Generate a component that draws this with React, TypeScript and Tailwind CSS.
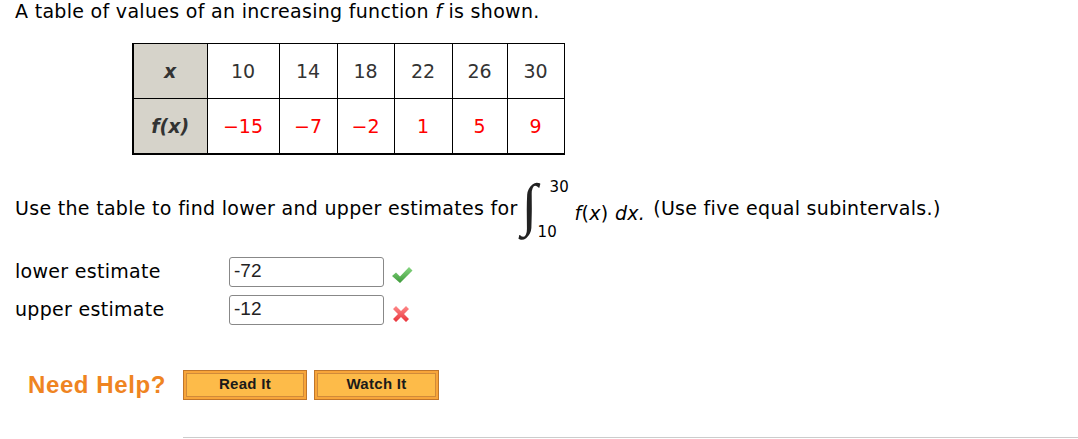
import React from "react";

const xs = ["10", "14", "18", "22", "26", "30"];
const fs = ["\u221215", "\u22127", "\u22122", "1", "5", "9"];
const widths = [72, 58, 57, 58, 55, 57];

function Check() {
  return (
    <svg width="22" height="20" viewBox="0 0 22 20">
      <defs>
        <linearGradient id="g" x1="0" y1="0" x2="0" y2="1">
          <stop offset="0" stopColor="#86d681" />
          <stop offset="1" stopColor="#3e9a3a" />
        </linearGradient>
      </defs>
      <path d="M1 11 L5 7.5 L9 11.5 L18 2 L21.5 5.5 L9 18 Z" fill="url(#g)" />
    </svg>
  );
}

function Cross() {
  return (
    <svg width="20" height="20" viewBox="0 0 20 20">
      <defs>
        <linearGradient id="r" x1="0" y1="0" x2="0" y2="1">
          <stop offset="0" stopColor="#ff8a8a" />
          <stop offset="1" stopColor="#e8333a" />
        </linearGradient>
      </defs>
      <path
        d="M2 5 L5 2 L10 7 L15 2 L18 5 L13 10 L18 15 L15 18 L10 13 L5 18 L2 15 L7 10 Z"
        fill="url(#r)"
      />
    </svg>
  );
}

function Btn({ label, w }: { label: string; w: string }) {
  return (
    <div className={`${w} h-[30px] border border-[#c0762a] bg-[#f7a53a] p-[2px]`}>
      <div className="h-full w-full border border-[#d08a3a] bg-[#fdbb49] flex items-center justify-center text-[15px] tracking-[0.3px] font-bold text-[#1a1a1a] [font-family:'Liberation_Sans',Arial,sans-serif]">
        {label}
      </div>
    </div>
  );
}

export default function App() {
  return (
    <div className="w-[1078px] h-[439px] bg-white text-[#000] [font-family:'DejaVu_Sans',Verdana,sans-serif] text-[19px] tracking-[0.3px] relative overflow-hidden">
      <div className="pl-[15px] leading-[22px]">
        A table of values of an increasing function <i>f</i> is shown.
      </div>
      <div className="pl-[132px] pt-[21px]">
        <table className="border-collapse border-l-2 border-b-2 border-t border-r border-black text-[19px] tracking-normal">
          <tbody>
            <tr className="h-[55px]">
              <td className="w-[74px] bg-[#d6d3ca] border border-black text-center font-bold italic text-[#333]">
                x
              </td>
              {xs.map((v, i) => (
                <td
                  key={v}
                  style={{ width: widths[i] }}
                  className="border border-black text-center text-[#333]"
                >
                  {v}
                </td>
              ))}
            </tr>
            <tr className="h-[55px]">
              <td className="bg-[#d6d3ca] border border-black text-center font-bold italic text-[#333]">
                f(x)
              </td>
              {fs.map((v, i) => (
                <td
                  key={i}
                  style={{ width: widths[i] }}
                  className="border border-black text-center text-[#ff0000]"
                >
                  {v}
                </td>
              ))}
            </tr>
          </tbody>
        </table>
      </div>
      <div className="pl-[15px] pt-[24px] flex items-center h-[84px]">
        <span>Use the table to find lower and upper estimates for</span>
        <span className="relative inline-block w-[54px] h-[62px] ml-[3px] tracking-normal">
          <span className="absolute left-[1px] top-[-8px] text-[58px] leading-[70px] [font-family:'Liberation_Serif',serif] text-[#222]">
            ∫
          </span>
          <span className="absolute left-[29px] top-[2px] text-[15px] leading-[15px]">30</span>
          <span className="absolute left-[17px] top-[47px] text-[15px] leading-[15px]">10</span>
        </span>
        <span className="italic mt-[10px]">
          f<span className="not-italic">(</span>x<span className="not-italic">)</span> dx.
        </span>
        <span className="ml-[8px]">(Use five equal subintervals.)</span>
      </div>
      <div className="pl-[15px] pt-[18px] flex flex-col gap-[8px]">
        <div className="flex items-center h-[30px]">
          <span className="w-[214px]">lower estimate</span>
          <div className="w-[155px] h-[30px] border border-[#888] rounded-[3px] flex items-center px-[4px] text-[19px] tracking-normal [font-family:'Liberation_Sans',Arial,sans-serif] text-[#222]">
            -72
          </div>
          <span className="ml-[7px] mt-[6px]">
            <Check />
          </span>
        </div>
        <div className="flex items-center h-[30px]">
          <span className="w-[214px]">upper estimate</span>
          <div className="w-[155px] h-[30px] border border-[#888] rounded-[3px] flex items-center px-[4px] text-[19px] tracking-normal [font-family:'Liberation_Sans',Arial,sans-serif] text-[#222]">
            -12
          </div>
          <span className="ml-[7px] mt-[8px]">
            <Cross />
          </span>
        </div>
      </div>
      <div className="pl-[28px] pt-[42px] flex items-center">
        <span className="text-[24px] font-bold tracking-[0.6px] text-[#ef8421] [font-family:'Liberation_Sans',Arial,sans-serif] w-[155px]">
          Need Help?
        </span>
        <div className="flex gap-[7px]">
          <Btn label="Read It" w="w-[124px]" />
          <Btn label="Watch It" w="w-[125px]" />
        </div>
      </div>
      <div className="absolute left-[183px] right-0 bottom-[1px] h-[1px] bg-[#cccccc]" />
    </div>
  );
}
